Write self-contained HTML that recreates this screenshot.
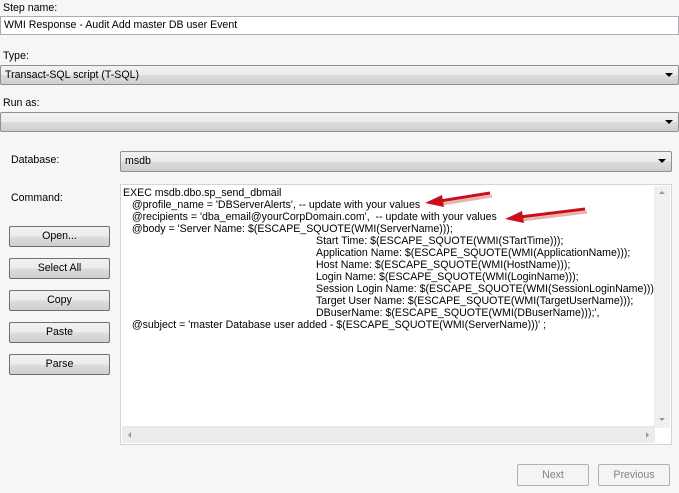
<html><head><style>
body{margin:0;width:679px;height:493px;background:#f6f6f6;font-family:Tahoma,"Liberation Sans",sans-serif;font-size:10.6px;color:#000;position:relative;overflow:hidden}
.a{position:absolute}
.box{position:absolute;background:#fff;border:1px solid #abadb3;box-sizing:border-box}
.cb{position:absolute;border:1px solid #8e8f8f;border-radius:2px;box-sizing:border-box;background:linear-gradient(#f2f2f2 0,#ebebeb 50%,#dcdcdc 51%,#cfcfcf 100%);padding:2px 4px;line-height:14px}
.cb:after{content:"";position:absolute;right:5px;top:7px;border-left:4px solid transparent;border-right:4px solid transparent;border-top:4px solid #000}
.btn{position:absolute;left:9px;width:101px;height:21px;border:1px solid #707070;border-radius:2px;box-sizing:border-box;background:linear-gradient(#f2f2f2 0,#ebebeb 50%,#dddddd 51%,#cfcfcf 100%);text-align:center;line-height:19px}
.dis{position:absolute;top:464px;height:22px;border:1px solid #adb2b5;border-radius:2px;box-sizing:border-box;background:#f4f4f4;color:#838383;text-align:center;line-height:20px}
pre{margin:0;font-family:inherit;font-size:10.6px;line-height:12px;position:absolute;left:2px;top:2px}
</style></head><body>
<div class="a" style="left:3px;top:2px">Step name:</div>
<div class="box" style="left:0;top:16px;width:679px;height:19px;padding:2px 3px;line-height:13px">WMI Response - Audit Add master DB user Event</div>
<div class="a" style="left:3px;top:50px">Type:</div>
<div class="cb" style="left:0;top:65px;width:679px;height:20px;right:auto">Transact-SQL script (T-SQL)</div>
<div class="a" style="left:3px;top:97px">Run as:</div>
<div class="cb" style="left:0;top:112px;width:679px;height:20px"></div>
<div class="a" style="left:11px;top:154px">Database:</div>
<div class="cb" style="left:120px;top:151px;width:552px;height:21px">msdb</div>
<div class="a" style="left:11px;top:192px">Command:</div>
<div class="box" style="left:120px;top:184px;width:552px;height:261px;border-color:#d5d5d5">
<pre>EXEC msdb.dbo.sp_send_dbmail
   @profile_name = 'DBServerAlerts', -- update with your values
   @recipients = 'dba_email@yourCorpDomain.com',  -- update with your values
   @body = 'Server Name: $(ESCAPE_SQUOTE(WMI(ServerName)));
<span style="padding-left:193px">Start Time: $(ESCAPE_SQUOTE(WMI(STartTime)));</span>
<span style="padding-left:193px">Application Name: $(ESCAPE_SQUOTE(WMI(ApplicationName)));</span>
<span style="padding-left:193px">Host Name: $(ESCAPE_SQUOTE(WMI(HostName)));</span>
<span style="padding-left:193px">Login Name: $(ESCAPE_SQUOTE(WMI(LoginName)));</span>
<span style="padding-left:193px">Session Login Name: $(ESCAPE_SQUOTE(WMI(SessionLoginName)));</span>
<span style="padding-left:193px">Target User Name: $(ESCAPE_SQUOTE(WMI(TargetUserName)));</span>
<span style="padding-left:193px">DBuserName: $(ESCAPE_SQUOTE(WMI(DBuserName)));',</span>
   @subject = 'master Database user added - $(ESCAPE_SQUOTE(WMI(ServerName)))' ;</pre>
<div class="a" style="right:1px;top:1px;width:15px;height:242px;background:#f0f0f0;border-left:1px solid #e8e8e8"></div>
<div class="a" style="right:6px;top:6px;border-left:3px solid transparent;border-right:3px solid transparent;border-bottom:3px solid #999"></div>
<div class="a" style="right:6px;top:233px;border-left:3px solid transparent;border-right:3px solid transparent;border-top:3px solid #999"></div>
<div class="a" style="left:1px;bottom:1px;width:533px;height:16px;background:#ececec;border-top:1px solid #e4e4e4"></div>
<div class="a" style="left:7px;bottom:6px;border-top:3px solid transparent;border-bottom:3px solid transparent;border-right:3px solid #999"></div>
<div class="a" style="left:525px;bottom:6px;border-top:3px solid transparent;border-bottom:3px solid transparent;border-left:3px solid #999"></div>
</div>
<svg class="a" style="left:0;top:0" width="679" height="493">
<g stroke="#b00" stroke-width="3" fill="#c00" opacity="0.3" transform="translate(2,3)"><line x1="490" y1="193" x2="440" y2="201"/><line x1="585" y1="209" x2="520" y2="217"/></g>
<g stroke="#c8101a" stroke-width="3" fill="#c8101a"><line x1="490" y1="193" x2="440" y2="201"/><polygon points="425,203 442,195 444,207" stroke="none"/>
<line x1="585" y1="209" x2="520" y2="217"/><polygon points="505,219 522,211 524,223" stroke="none"/></g>
</svg>
<div class="btn" style="top:226px">Open...</div>
<div class="btn" style="top:258px">Select All</div>
<div class="btn" style="top:290px">Copy</div>
<div class="btn" style="top:322px">Paste</div>
<div class="btn" style="top:354px">Parse</div>
<div class="dis" style="left:517px;width:72px">Next</div>
<div class="dis" style="left:598px;width:72px">Previous</div>
</body></html>
